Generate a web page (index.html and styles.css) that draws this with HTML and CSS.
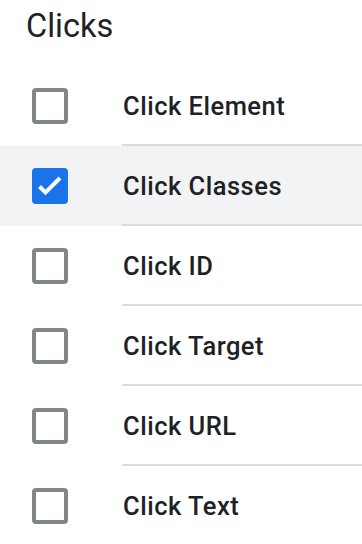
FILE: index.html
```html
<!doctype html>
<html lang="en-US">
  <head>
    <meta charset="UTF-8" />
    <meta name="viewport" content="width=device-width, initial-scale=1" />
    <link rel="stylesheet" href="styles.css">
  </head>
  <body class="l-page">
    <h2 class="group-title">Clicks</h2>
    <ul class="var-list">
      <li class="var-row">
        <span class="check"></span>
        <span class="var-row__label">Click Element</span>
      </li>
      <li class="var-row var-row--checked">
        <span class="check check--on">
          <svg viewBox="0 0 36 36" width="36" height="36"><path d="M7.5 18.5l6 6L28 10" fill="none" stroke="#fff" stroke-width="4"/></svg>
        </span>
        <span class="var-row__label">Click Classes</span>
      </li>
      <li class="var-row">
        <span class="check"></span>
        <span class="var-row__label">Click ID</span>
      </li>
      <li class="var-row">
        <span class="check"></span>
        <span class="var-row__label">Click Target</span>
      </li>
      <li class="var-row">
        <span class="check"></span>
        <span class="var-row__label">Click URL</span>
      </li>
      <li class="var-row">
        <span class="check"></span>
        <span class="var-row__label">Click Text</span>
      </li>
    </ul>
  </body>
</html>
```

FILE: styles.css
```css
.l-page {
  margin: 0;
  background: #fff;
  color: #202124;
  font-family: Roboto, "Noto Sans", sans-serif;
}

.group-title {
  margin: 0;
  padding: 7px 0 0 26px;
  height: 59px;
  font-size: 32.5px;
  font-weight: 400;
  line-height: 38px;
}

.var-list {
  margin: 0;
  padding: 0;
  list-style: none;
}

.var-row {
  display: flex;
  align-items: center;
  height: 80px;
  position: relative;
}

.var-row + .var-row::before {
  content: "";
  position: absolute;
  top: -2px;
  left: 122px;
  right: 0;
  height: 2px;
  background: #dadce0;
}

.var-row--checked {
  background: #f1f3f4;
}

.check {
  box-sizing: border-box;
  width: 36px;
  height: 36px;
  margin-left: 32px;
  border: 4px solid #80868b;
  border-radius: 4px;
  flex: none;
}

.check--on {
  background: #1a73e8;
  border: 0;
}

.check--on svg {
  display: block;
}

.var-row__label {
  margin-left: 55px;
  font-size: 25.5px;
  font-weight: 500;
  letter-spacing: 0.5px;
}
```
